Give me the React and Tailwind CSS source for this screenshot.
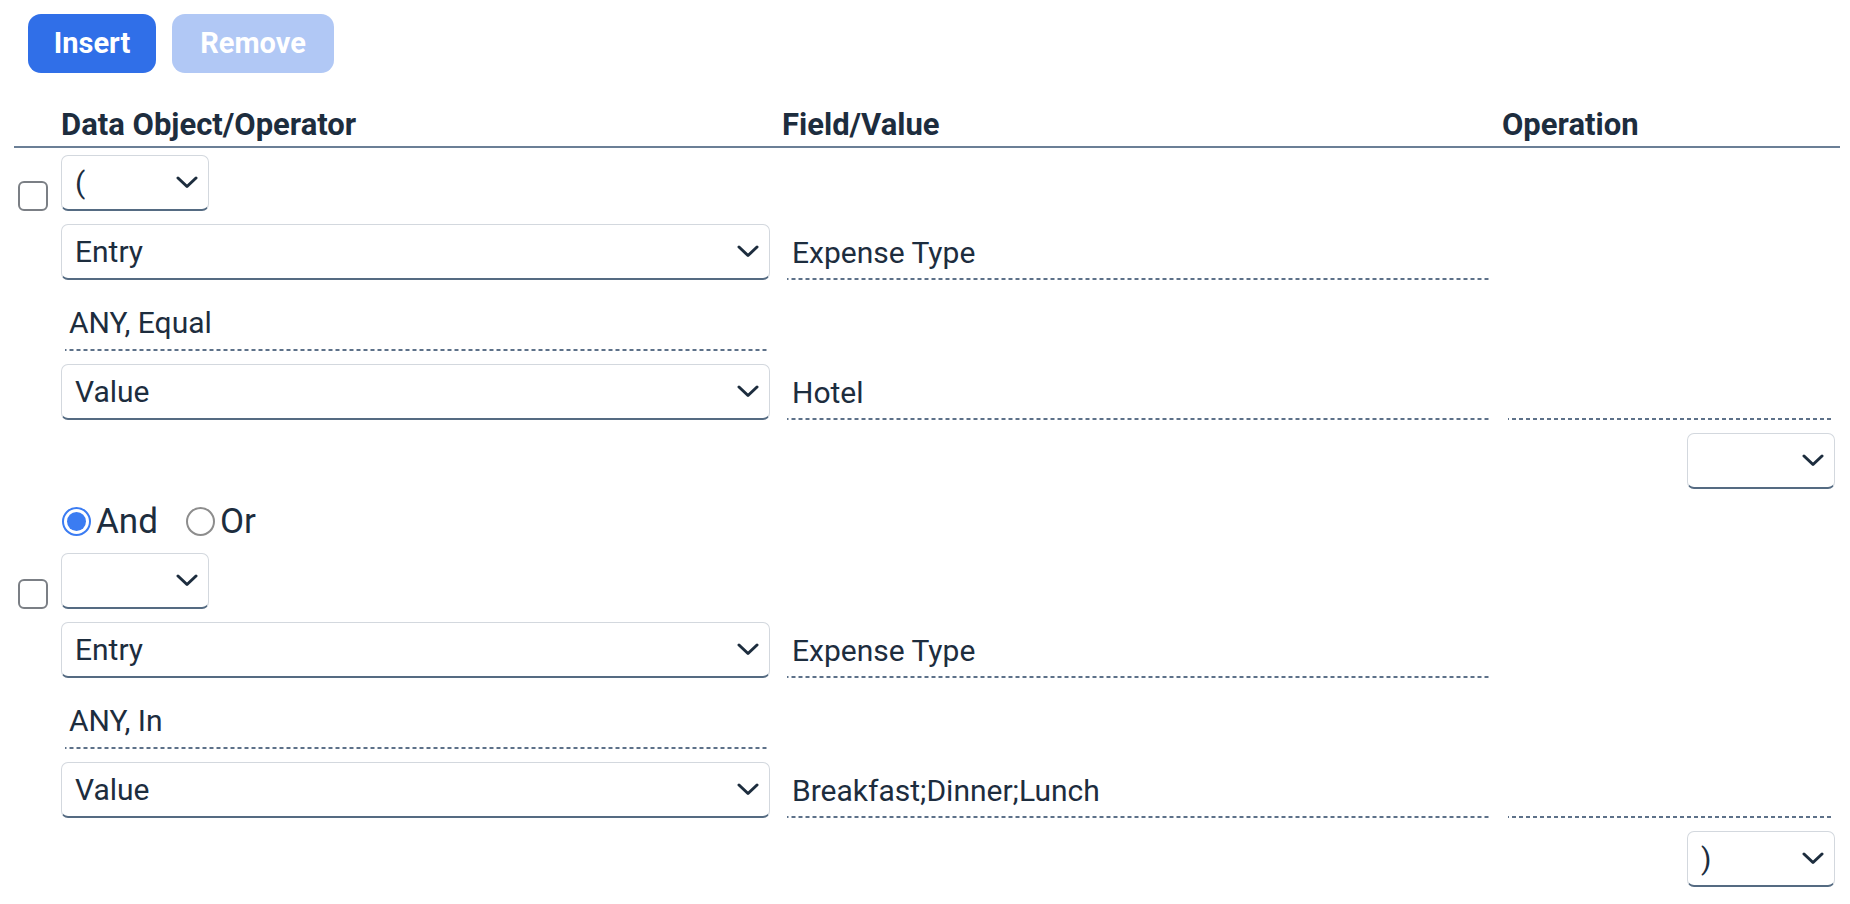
import React from "react";

function Chevron() {
  return (
    <svg width="22" height="13" viewBox="0 0 22 13" fill="none">
      <path d="M2 2 L11 10.5 L20 2" stroke="#1d2d3e" strokeWidth="3" strokeLinecap="round" strokeLinejoin="round" />
    </svg>
  );
}

function Select({ value, className }) {
  return (
    <div
      className={`flex items-center justify-between h-[56px] pl-[13px] pr-[10px] bg-white border border-[#d3d8de] border-b-2 border-b-[#556b82] rounded-[7px] ${className}`}
    >
      <span>{value}</span>
      <Chevron />
    </div>
  );
}

// dashed underline drawn as a repeating gradient so the dash length matches
function Dashed({ value, className }) {
  return (
    <div
      className={`flex items-center bg-[linear-gradient(to_right,#5d7189_60%,transparent_60%)] bg-[length:7px_2px] bg-repeat-x bg-bottom ${className}`}
    >
      {value}
    </div>
  );
}

function Checkbox() {
  return <div className="ml-[4px] w-[30px] h-[30px] rounded-[6px] border-2 border-[#7b7f85] bg-white" />;
}

function Radio({ checked, label }) {
  return (
    <div className="flex items-center gap-[5px]">
      {checked ? (
        <div className="w-[29px] h-[29px] rounded-full border-2 border-[#3b7cf2] p-[3px]">
          <div className="w-full h-full rounded-full bg-[#3b7cf2]" />
        </div>
      ) : (
        <div className="w-[29px] h-[29px] rounded-full border-2 border-[#8d8d8d]" />
      )}
      <span className="text-[35px] leading-none">{label}</span>
    </div>
  );
}

const rowCls = "grid grid-cols-[47px_721px_720px_338px] items-end";

function Condition({ open, field, operator, value, close }) {
  return (
    <>
      <div className={`${rowCls} items-center`}>
        <Checkbox />
        <Select value={open} className="w-[148px]" />
      </div>
      <div className={rowCls}>
        <div />
        <Select value="Entry" className="w-[709px]" />
        <Dashed value={field} className="ml-[5px] w-[702px] h-[56px] pl-[5px]" />
      </div>
      <div className={rowCls}>
        <div />
        <Dashed value={operator} className="ml-[4px] w-[702px] h-[58px] pl-[4px]" />
      </div>
      <div className={rowCls}>
        <div />
        <Select value="Value" className="w-[709px]" />
        <Dashed value={value} className="ml-[5px] w-[702px] h-[56px] pl-[5px]" />
        <Dashed value="" className="ml-[6px] w-[323px] h-[56px]" />
      </div>
      <div className={rowCls}>
        <div />
        <div />
        <div />
        <div className="flex justify-end pr-[5px]">
          <Select value={close} className="w-[148px]" />
        </div>
      </div>
    </>
  );
}

export default function App() {
  return (
    <div className="w-[1850px] h-[904px] bg-white text-[#1d2d3e] text-[30px] font-['Roboto',sans-serif] overflow-hidden">
      <div className="flex gap-[16px] pl-[28px] pt-[14px]">
        <button className="h-[59px] w-[128px] rounded-[13px] bg-[#306fe8] text-white font-bold text-[29px]">
          Insert
        </button>
        <button className="h-[59px] w-[162px] rounded-[13px] bg-[#b1c8f5] text-white font-bold text-[29px]">
          Remove
        </button>
      </div>
      <div className="ml-[14px] w-[1826px]">
        <div className="grid grid-cols-[47px_721px_720px_338px] h-[75px] items-end pb-[1px] border-b-2 border-[#6b7f96] font-bold text-[31px] leading-[40px]">
          <div />
          <div>Data Object/Operator</div>
          <div>Field/Value</div>
          <div>Operation</div>
        </div>
        <div className="flex flex-col gap-[13px] pt-[7px]">
          <Condition open="(" field="Expense Type" operator="ANY, Equal" value="Hotel" close="" />
          <div className={rowCls}>
            <div />
            <div className="flex items-center gap-[28px] h-[38px] pl-[1px]">
              <Radio checked label="And" />
              <Radio label="Or" />
            </div>
          </div>
          <Condition open="" field="Expense Type" operator="ANY, In" value="Breakfast;Dinner;Lunch" close=")" />
        </div>
      </div>
    </div>
  );
}
